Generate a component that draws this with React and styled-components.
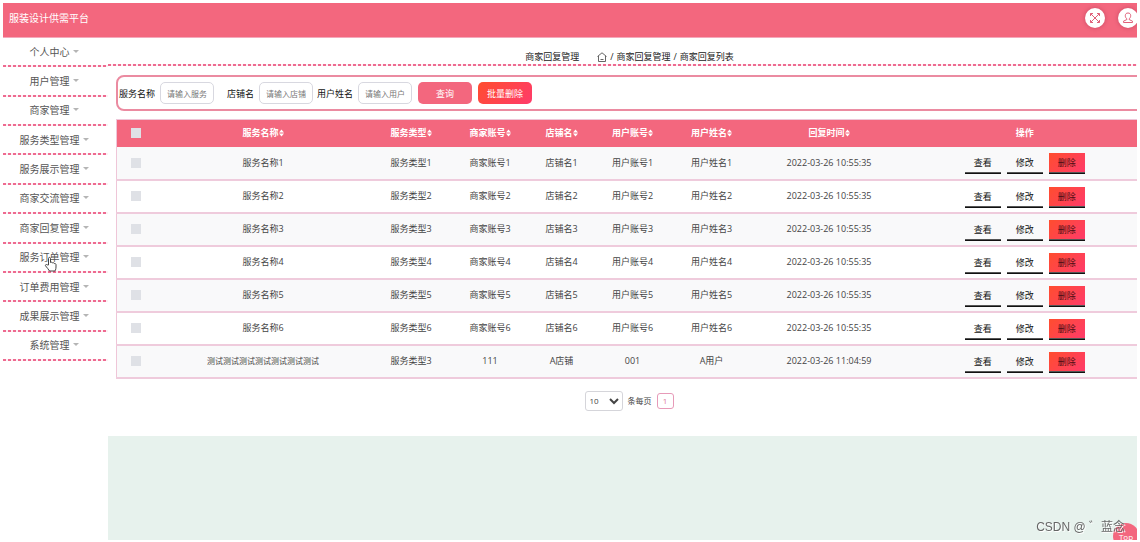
import React from 'react';
import styled, { createGlobalStyle, css } from 'styled-components';

const pink = '#f3677e';
const sunset = 'linear-gradient(135deg, #ff4d2e, #ff3b6b)';
const dashes = 'repeating-linear-gradient(90deg, #ee6a90 0 3px, #fdf0f4 3px 5px)';

const GlobalStyle = createGlobalStyle`
  *, *::before, *::after { box-sizing: border-box; }
  html { background: #fff; }
  body {
    margin: 0;
    font-family: "Open Sans", "Noto Sans CJK SC", sans-serif;
    font-size: 8px;
    color: #444;
  }
  button, input, select { font: inherit; color: inherit; margin: 0; }
`;

const Frame = styled.div`
  padding: 3px 3px 2px;
`;

const Page = styled.div`
  display: flex;
  flex-direction: column;
  min-height: calc(100vh - 5px);
  overflow: hidden;
`;

const TopBar = styled.header`
  display: flex;
  align-items: center;
  justify-content: space-between;
  height: 35px;
  padding: 0 0 4px 6px;
  background: ${pink};
  border-bottom: 1px solid #f4a9bb;
  overflow: hidden;
`;

const Brand = styled.h1`
  margin: 0;
  font-size: 10px;
  line-height: 14px;
  font-weight: 400;
  color: #fff;
`;

const TopActions = styled.div`
  display: flex;
  gap: 13px;
  margin-right: -1px;
`;

const RoundButton = styled.button`
  display: grid;
  place-items: center;
  width: 20px;
  height: 20px;
  padding: 0;
  border: 0;
  border-radius: 50%;
  background: #fff;
  color: #e0607a;
  box-shadow: 0 0 4px rgba(120, 20, 50, 0.35);
`;

const Columns = styled.div`
  display: flex;
  flex: 1;
`;

const Sidebar = styled.nav`
  flex: none;
  width: 105px;
`;

const Menu = styled.ul`
  display: flex;
  flex-direction: column;
  height: 323px;
  margin: 0;
  padding: 0;
  list-style: none;
`;

const MenuItem = styled.li`
  flex: 1;
  background: ${dashes} bottom / 100% 2px no-repeat;
`;

const MenuLink = styled.a`
  display: flex;
  align-items: center;
  justify-content: center;
  gap: 3px;
  height: 100%;
  padding: 0 3px 3px 0;
  font-size: 10px;
  color: #555;
  text-decoration: none;
`;

const Caret = styled.span`
  border: 3px solid transparent;
  border-top-color: #b5b5b5;
  border-bottom: 0;
`;

const Main = styled.main`
  flex: 1;
  display: flex;
  flex-direction: column;
  margin-right: -7px;
`;

const Crumbs = styled.div`
  display: flex;
  align-items: flex-end;
  justify-content: center;
  gap: 18px;
  height: 28px;
  padding: 0 0 3px 7px;
  background: ${dashes} bottom / 100% 2px no-repeat;
  font-size: 9px;
  line-height: 12px;
  color: #222;
`;

const Trail = styled.div`
  display: flex;
  align-items: center;
  gap: 3px;
`;

const Content = styled.div`
  padding: 9px 0 0 8px;
`;

const SearchForm = styled.form`
  display: flex;
  align-items: center;
  gap: 6px;
  height: 36px;
  padding: 0 0 0 3px;
  border: 2px solid #eb8ba1;
  border-radius: 8px;
`;

const Field = styled.label`
  display: flex;
  align-items: center;
  justify-content: flex-end;
  gap: 5px;
  width: 93px;
  font-size: 9px;
  color: #111;
  white-space: nowrap;
`;

const TextBox = styled.input`
  flex: none;
  width: 54px;
  height: 22px;
  padding: 0 6px;
  border: 1px solid #d8d8e0;
  border-radius: 5px;
  background: #fff;
  font-size: 8px;
  &::placeholder { color: #777; opacity: 1; }
`;

const FormButton = styled.button`
  width: 54px;
  height: 22px;
  padding: 0;
  border: 0;
  border-radius: 5px;
  background: ${p => (p.$danger ? sunset : pink)};
  font-size: 9px;
  color: #fff;
`;

const Table = styled.table`
  width: 100%;
  margin-top: 8px;
  border: 1px solid #efc6d8;
  border-collapse: collapse;
  table-layout: fixed;
  text-align: center;
`;

const HeadRow = styled.tr`
  height: 27px;
  background: ${pink};
  color: #fff;
`;

const Row = styled.tr`
  height: 33px;
  border-bottom: 2px solid #efcbdc;
  &:nth-child(odd) { background: #f9f9fa; }
`;

const cell = css`
  padding: 0;
  font-size: 9px;
  line-height: 12px;
  white-space: nowrap;
`;

const HeadCell = styled.th`
  ${cell}
  font-weight: 700;
`;

const Cell = styled.td`
  ${cell}
  ${p => p.$dense && 'font-size: 8px;'}
`;

const SortLabel = styled.span`
  display: inline-flex;
  align-items: center;
`;

const Tick = styled.input`
  appearance: none;
  display: block;
  width: 10px;
  height: 10px;
  margin: 0 auto;
  background: #dfe1e6;
`;

const RowActions = styled.div`
  display: flex;
  justify-content: center;
  gap: 6px;
  padding-top: 2px;
`;

const RowButton = styled.button`
  width: 36px;
  height: 21px;
  padding: 0;
  border: 0;
  border-bottom: 1px solid #111;
  box-shadow: inset 0 -1px #555;
  background: ${p => (p.$danger ? sunset : 'transparent')};
  color: ${p => (p.$danger ? '#4a0d14' : '#111')};
`;

const Pager = styled.div`
  display: flex;
  align-items: center;
  justify-content: center;
  gap: 5px;
  height: 57px;
  padding: 0 2px 13px 0;
`;

const PageSize = styled.select`
  width: 38px;
  height: 20px;
  padding: 0;
  border: 1px solid #d5d5da;
  border-radius: 3px;
  background: #fff;
`;

const PageNumber = styled.button`
  width: 17px;
  height: 16px;
  padding: 0;
  border: 1px solid #e79ab8;
  border-radius: 3px;
  background: #fff;
  color: #e07a9c;
`;

const Backdrop = styled.div`
  flex: 1;
  min-height: 80px;
  background: #e7f2ed;
`;

const Watermark = styled.div`
  position: fixed;
  right: 15px;
  bottom: 7px;
  z-index: 2;
  font-family: "Liberation Sans", "Noto Sans CJK SC", sans-serif;
  font-size: 12px;
  line-height: 16px;
  color: #666;
  text-shadow: 1px 1px #fff;
`;

const TopClip = styled.div`
  position: fixed;
  right: 3px;
  bottom: 2px;
  width: 24px;
  height: 17px;
  overflow: hidden;
`;

const TopButton = styled.button`
  display: block;
  width: 26px;
  height: 26px;
  padding: 0;
  border: 0;
  border-radius: 50%;
  background: ${pink};
  color: #fff;
`;

const Pointer = styled.svg`
  position: absolute;
  left: 44px;
  top: 256px;
`;

const menu = ['个人中心', '用户管理', '商家管理', '服务类型管理', '服务展示管理', '商家交流管理',
  '商家回复管理', '服务订单管理', '订单费用管理', '成果展示管理', '系统管理'];

const fields = [
  { label: '服务名称', hint: '请输入服务' },
  { label: '店铺名', hint: '请输入店铺' },
  { label: '用户姓名', hint: '请输入用户' },
];

const columns = [
  { name: '服务名称', width: 217 },
  { name: '服务类型', width: 79 },
  { name: '商家账号', width: 79 },
  { name: '店铺名', width: 64 },
  { name: '用户账号', width: 78 },
  { name: '用户姓名', width: 80 },
  { name: '回复时间', width: 155 },
];
const tickWidth = 38;
const actionsWidth = 237;
const total = columns.reduce((sum, c) => sum + c.width, tickWidth + actionsWidth);
const share = width => `${(width / total) * 100}%`;

const rows = [1, 2, 3, 4, 5, 6].map(n => [
  `服务名称${n}`, `服务类型${n}`, `商家账号${n}`, `店铺名${n}`, `用户账号${n}`, `用户姓名${n}`,
  '2022-03-26 10:55:35',
]);
rows.push(['测试测试测试测试测试测试测试', '服务类型3', '111', 'A店铺', '001', 'A用户', '2022-03-26 11:04:59']);

const SortIcon = () => (
  <svg width="5" height="8" viewBox="0 0 5 8" fill="currentColor" aria-hidden="true">
    <path d="M2.5 0.5 5 3.5H0zM2.5 7.5 0 4.5h5z" />
  </svg>
);

const ExpandIcon = () => (
  <svg width="10" height="10" viewBox="0 0 10 10" fill="none" stroke="currentColor" aria-hidden="true">
    <path d="M.5 3V.5H3M7 .5h2.500V3M9.500 7v2.500H7M3 9.500H.5V7M.5.5l9 9M9.500.5l-9 9" />
  </svg>
);

const UserIcon = () => (
  <svg width="12" height="12" viewBox="0 0 12 12" fill="none" stroke="currentColor" aria-hidden="true">
    <path d="M6 1C4.200 1 3.300 2.100 3.300 3.700c0 1.400.7 2.600 1.600 3.100V7.500L1.500 9.200v1.300h9V9.200L7.100 7.500V6.800c.9-.5 1.600-1.700 1.600-3.100C8.700 2.100 7.800 1 6 1z" />
  </svg>
);

const HomeIcon = () => (
  <svg width="10" height="10" viewBox="0 0 10 10" fill="none" stroke="#555" aria-hidden="true">
    <path d="M.5 4.500 5 .8l4.500 3.700M1.500 4v5.500h7V4M3.500 7.500h3" strokeWidth=".9" />
  </svg>
);

export default function App() {
  return (
    <Frame>
      <GlobalStyle />
      <Page>
        <TopBar>
          <Brand>服装设计供需平台</Brand>
          <TopActions>
            <RoundButton aria-label="全屏"><ExpandIcon /></RoundButton>
            <RoundButton aria-label="用户"><UserIcon /></RoundButton>
          </TopActions>
        </TopBar>
        <Columns>
          <Sidebar>
            <Menu>
              {menu.map(name => (
                <MenuItem key={name}><MenuLink href="#">{name}<Caret /></MenuLink></MenuItem>
              ))}
            </Menu>
          </Sidebar>
          <Main>
            <Crumbs>
              <span>商家回复管理</span>
              <Trail>
                <HomeIcon /><span>/</span><span>商家回复管理</span><span>/</span><span>商家回复列表</span>
              </Trail>
            </Crumbs>
            <Content>
              <SearchForm onSubmit={e => e.preventDefault()}>
                {fields.map(f => (
                  <Field key={f.label}>
                    {f.label}
                    <TextBox type="text" placeholder={f.hint} />
                  </Field>
                ))}
                <FormButton type="submit">查询</FormButton>
                <FormButton type="button" $danger>批量删除</FormButton>
              </SearchForm>
              <Table>
                <colgroup>
                  <col style={{ width: share(tickWidth) }} />
                  {columns.map(c => <col key={c.name} style={{ width: share(c.width) }} />)}
                  <col style={{ width: share(actionsWidth) }} />
                </colgroup>
                <thead>
                  <HeadRow>
                    <HeadCell><Tick type="checkbox" aria-label="全选" /></HeadCell>
                    {columns.map(c => (
                      <HeadCell key={c.name}><SortLabel>{c.name}<SortIcon /></SortLabel></HeadCell>
                    ))}
                    <HeadCell>操作</HeadCell>
                  </HeadRow>
                </thead>
                <tbody>
                  {rows.map(row => (
                    <Row key={row[0]}>
                      <Cell><Tick type="checkbox" aria-label={row[0]} /></Cell>
                      {row.map((text, i) => (
                        <Cell key={columns[i].name} $dense={i === 0 && text.length > 10}>{text}</Cell>
                      ))}
                      <Cell>
                        <RowActions>
                          <RowButton>查看</RowButton>
                          <RowButton>修改</RowButton>
                          <RowButton $danger>删除</RowButton>
                        </RowActions>
                      </Cell>
                    </Row>
                  ))}
                </tbody>
              </Table>
              <Pager>
                <PageSize aria-label="每页条数" defaultValue="10">
                  <option>10</option>
                  <option>20</option>
                </PageSize>
                <span>条每页</span>
                <PageNumber>1</PageNumber>
              </Pager>
            </Content>
            <Backdrop />
          </Main>
        </Columns>
      </Page>
      <TopClip><TopButton>Top</TopButton></TopClip>
      <Watermark>CSDN @ ゛蓝念</Watermark>
      <Pointer width="13" height="16" viewBox="0 0 13 16" fill="#fff" stroke="#444" aria-hidden="true">
        <path d="M4.500 9V2.500C4.500 1 6.500 1 6.500 2.500V6.500C7 6 8.300 6 8.500 7c.7-.6 1.700-.3 1.900.6.800-.3 1.600.2 1.600 1.100V11c0 2.500-1 4-1 4H5.500C4.500 13 3 12 1.500 9.800 1 8.800 2.300 8 3.200 8.900z" />
      </Pointer>
    </Frame>
  );
}
